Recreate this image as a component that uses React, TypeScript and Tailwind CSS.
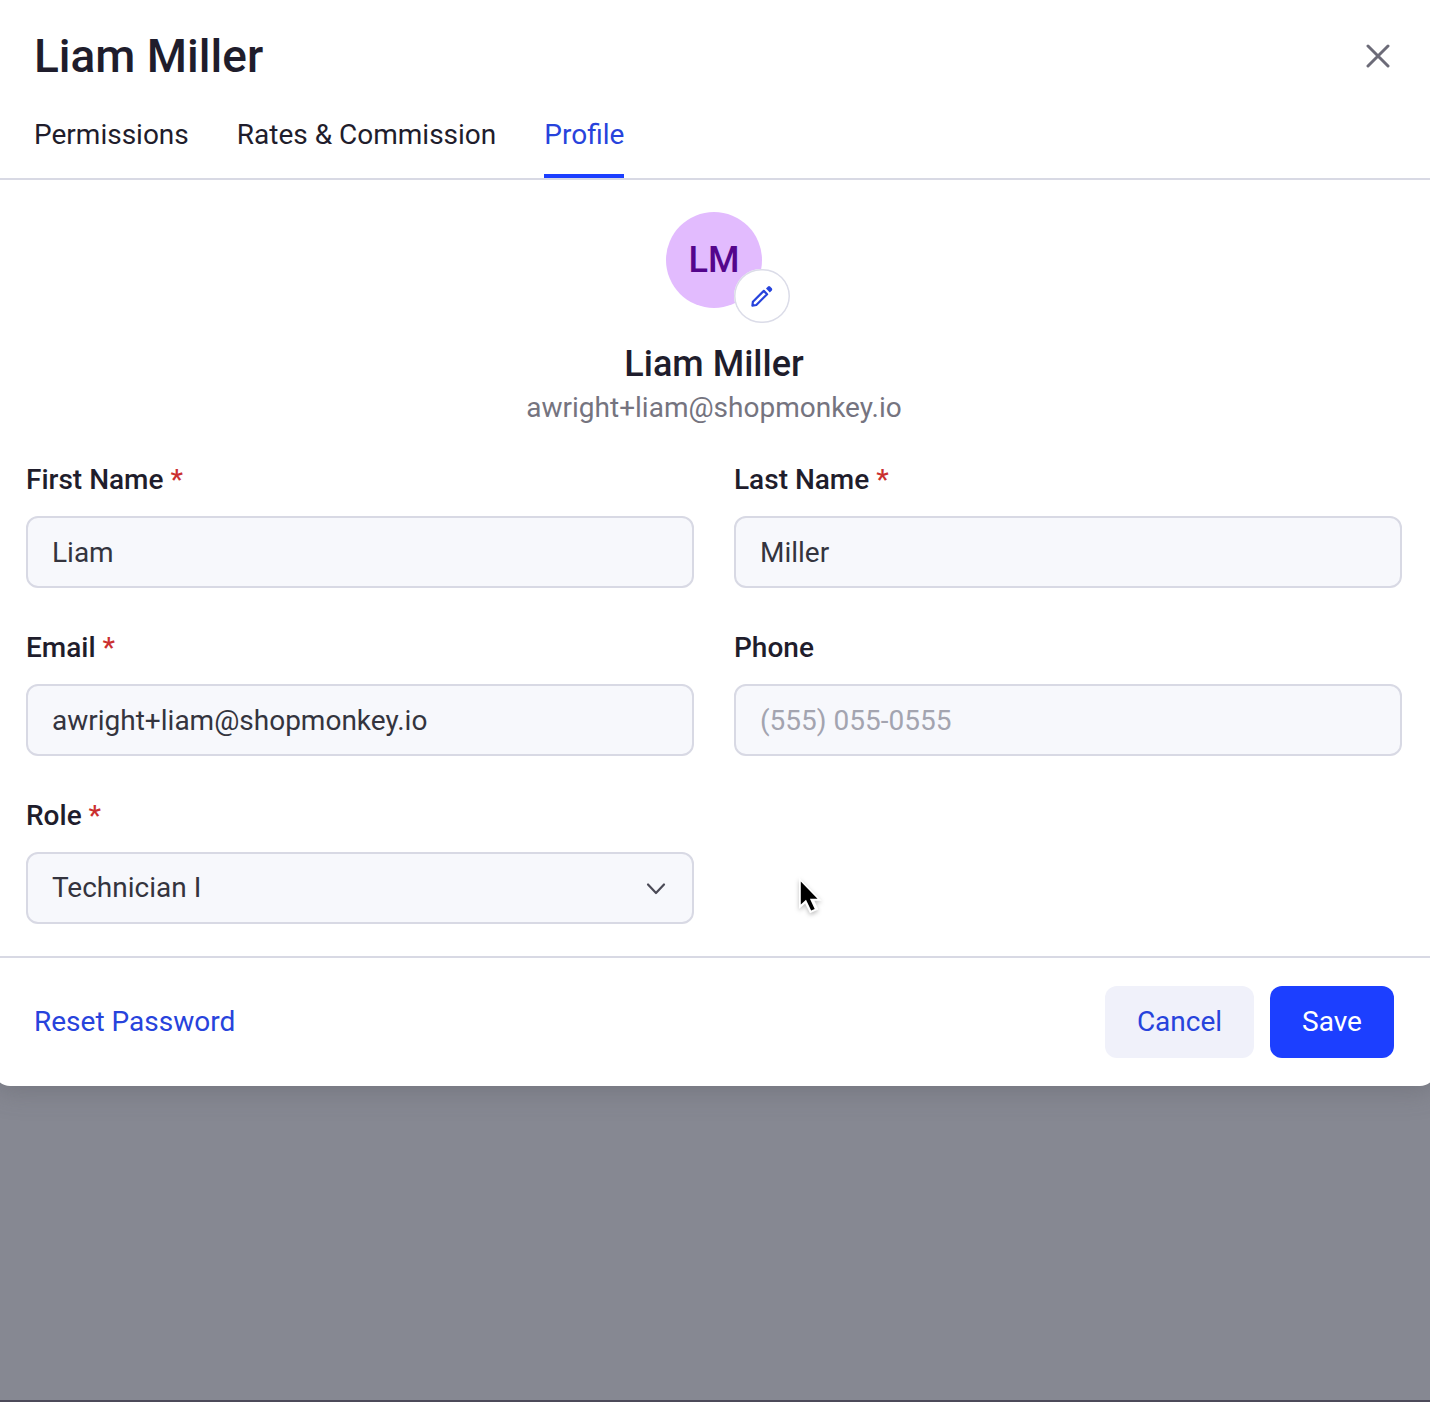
import { clsx } from "clsx";

interface FieldProps {
  label: string;
  value?: string;
  placeholder?: string;
  required?: boolean;
  select?: boolean;
}

const tabs = [
  { label: "Permissions", active: false },
  { label: "Rates & Commission", active: false },
  { label: "Profile", active: true },
];

function CloseIcon() {
  return (
    <svg className="h-6 w-6" viewBox="0 0 24 24" fill="none" stroke="#6c6b78" strokeWidth="3" strokeLinecap="round">
      <path d="M2 2l20 20M22 2L2 22" />
    </svg>
  );
}

function PencilIcon() {
  return (
    <svg className="h-6 w-6" viewBox="0 0 24 24" fill="none" stroke="#2743dc" strokeWidth="2.2" strokeLinejoin="round">
      <path d="M2.4 21.6l.5-3.9L13.8 6.9l3.3 3.3L6.3 21z" />
      <path d="M16 4.6l2-2a1.5 1.5 0 0 1 2.1 0l1.7 1.7a1.5 1.5 0 0 1 0 2.1l-2 2z" fill="#2743dc" stroke="none" />
    </svg>
  );
}

function Field({ label, value, placeholder, required, select }: FieldProps) {
  return (
    <div className="flex flex-col">
      <label className="h-8 text-[28px] leading-8 font-medium text-[#1f1d2c]">
        {label}
        {required && <span className="text-[#cb3030]"> *</span>}
      </label>
      <div className="mt-5 flex h-[72px] items-center justify-between rounded-xl border-2 border-[#d8d9e4] bg-[#f7f8fc] pr-[26px] pl-6">
        <span
          className={clsx(
            "text-[28px] leading-8",
            value ? "text-[#34343e]" : "text-[#a3a4b0]",
            !select && "pt-0.5",
          )}
        >
          {value ?? placeholder}
        </span>
        {select && (
          <svg className="h-5 w-5" viewBox="0 0 20 20" fill="none" stroke="#4b4a56" strokeWidth="2.2" strokeLinecap="round" strokeLinejoin="round">
            <path d="M2 6.5l8 8.5 8-8.5" />
          </svg>
        )}
      </div>
    </div>
  );
}

function Cursor() {
  return (
    <svg className="absolute top-[872px] left-[792px] h-12 w-9 drop-shadow-[0_2px_2px_rgba(0,0,0,0.25)]" viewBox="0 0 36 48">
      <path d="M7 5.5V37l6.2-5.6 4.8 9.8 8.4-3.6-4-8.8h7.4z" fill="#fff" />
      <path d="M8.8 9.5v23l5.2-4.8 5.2 10.8 3.5-1.6-4.8-10.2h7.6z" fill="#000" />
    </svg>
  );
}

export default function App() {
  return (
    <div className="relative flex h-[1402px] w-full flex-col overflow-hidden border-b-2 border-[#4c4a59] bg-[#868892] font-[Roboto,sans-serif]">
      <div className="-mx-1.5 h-[1086px] shrink-0 rounded-b-2xl bg-white px-1.5 shadow-[0_4px_28px_rgba(80,80,90,0.35)]">
        <header className="-mx-1.5 h-[180px] border-b-2 border-[#d8d9e4] pr-[46px] pl-10">
          <div className="flex h-28 items-center justify-between">
            <h1 className="text-[46px] leading-[56px] font-medium text-[#1f1d2c]">Liam Miller</h1>
            <button aria-label="Close">
              <CloseIcon />
            </button>
          </div>
          <nav className="flex h-[66px] gap-12">
            {tabs.map((tab) => (
              <a
                key={tab.label}
                className={clsx(
                  "h-full border-b-4 pt-[7px] text-[28px] leading-8",
                  tab.active ? "border-[#1c3fff] text-[#2743dc]" : "border-transparent text-[#1f1d2c]",
                )}
              >
                {tab.label}
              </a>
            ))}
          </nav>
        </header>

        <section className="flex h-[284px] flex-col items-center pt-8 pr-0.5">
          <div className="relative flex h-24 w-24 items-center justify-center rounded-full bg-[#e2bbfe] text-[36px] font-medium text-[#54058c]">
            LM
            <button
              aria-label="Edit picture"
              className="absolute top-[57px] left-[68px] flex h-[54px] w-14 items-center justify-center rounded-full bg-white inset-ring-[1.5px] inset-ring-[#dbdce8]"
            >
              <PencilIcon />
            </button>
          </div>
          <h2 className="mt-9 text-[36px] leading-10 font-medium text-[#1f1d2c]">Liam Miller</h2>
          <p className="mt-2 text-[28px] leading-8 text-[#75747f]">awright+liam@shopmonkey.io</p>
        </section>

        <div className="grid h-[492px] grid-cols-2 content-start gap-x-10 gap-y-11 pr-7 pl-[26px]">
          <Field label="First Name" value="Liam" required />
          <Field label="Last Name" value="Miller" required />
          <Field label="Email" value="awright+liam@shopmonkey.io" required />
          <Field label="Phone" placeholder="(555) 055-0555" />
          <Field label="Role" value="Technician I" required select />
        </div>

        <footer className="-mx-1.5 flex h-[130px] items-center border-t-2 border-[#d8d9e4] pr-[42px] pl-10 text-[28px] leading-8">
          <button className="mr-auto text-[#2743dc]">Reset Password</button>
          <button className="h-[72px] w-[149px] rounded-xl bg-[#f0f1fa] text-[#2743dc]">Cancel</button>
          <button className="ml-4 h-[72px] w-31 rounded-xl bg-[#1c3fff] text-white">Save</button>
        </footer>
      </div>
      <Cursor />
    </div>
  );
}
